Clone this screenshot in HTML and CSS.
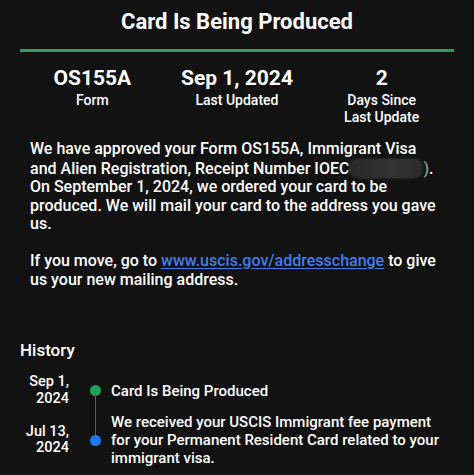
FILE: index.html
```html
<!DOCTYPE html>
<html lang="en">
<head>
<meta charset="utf-8">
<title>Card Is Being Produced</title>
<link rel="stylesheet" href="styles.css">
</head>
<body>
<main class="page">
  <h1 class="title">Card Is Being Produced</h1>
  <div class="divider"></div>
  <section class="stats">
    <div class="stat">
      <div class="stat-value">OS155A</div>
      <div class="stat-label">Form</div>
    </div>
    <div class="stat">
      <div class="stat-value">Sep 1, 2024</div>
      <div class="stat-label">Last Updated</div>
    </div>
    <div class="stat">
      <div class="stat-value">2</div>
      <div class="stat-label">Days Since<br>Last Update</div>
    </div>
  </section>
  <section class="message">
    <p>We have approved your Form OS155A, Immigrant Visa and Alien Registration, Receipt Number IOEC<span class="redact"></span><span class="dim">)</span>. On September 1, 2024, we ordered your card to be produced. We will mail your card to the address you gave us.</p>
    <p>If you move, go to <a class="link" href="#">www.uscis.gov/addresschange</a> to give us your new mailing address.</p>
  </section>
  <h2 class="history-title">History</h2>
  <ol class="timeline">
    <li class="event">
      <div class="event-date">Sep 1,<br>2024</div>
      <div class="event-dot-cell"><span class="dot dot-green first"></span></div>
      <div class="event-text">Card Is Being Produced</div>
    </li>
    <li class="event">
      <div class="event-date">Jul 13,<br>2024</div>
      <div class="event-dot-cell"><span class="dot dot-blue"></span></div>
      <div class="event-text">We received your USCIS Immigrant fee payment for your Permanent Resident Card related to your immigrant visa.</div>
    </li>
  </ol>
</main>
</body>
</html>
```

FILE: styles.css
```css
html, body {
  margin: 0;
  padding: 0;
  background: #121212;
}
body {
  color: #ffffff;
  font-family: Roboto, "Liberation Sans", Arial, sans-serif;
}
.page {
  padding: 8px 20px 0 20px;
}
.title {
  margin: 0;
  font-size: 22px;
  line-height: 28px;
  font-weight: 700;
  text-align: center;
}
.divider {
  margin-top: 13px;
  height: 3px;
  background: #2f9e5f;
}
.stats {
  display: grid;
  grid-template-columns: 1fr 1fr 1fr;
  margin-top: 13px;
  text-align: center;
}
.stat-value {
  font-size: 21px;
  line-height: 26px;
  font-weight: 700;
}
.stat-label {
  margin-top: 1px;
  font-size: 14px;
  line-height: 17px;
  font-weight: 500;
}
.message {
  margin-top: 14px;
  padding: 0 10px;
  font-size: 16px;
  line-height: 18.5px;
  font-weight: 500;
}
.message p {
  margin: 0 0 18.5px 0;
}
.redact {
  display: inline-block;
  width: 74px;
  height: 19px;
  vertical-align: -4px;
  border-radius: 10px;
  background: linear-gradient(90deg, #2a2a2a, #323232 60%, #2b2b2b);
  box-shadow: 0 0 3px 1px #262626;
}
.dim {
  color: #9a9a9a;
}
.link {
  color: #3f7ef0;
  text-decoration: underline;
  text-underline-offset: 2px;
}
.history-title {
  margin: 50px 0 0 0;
  font-size: 17px;
  line-height: 22px;
  font-weight: 500;
}
.timeline {
  list-style: none;
  margin: 13px 0 0 0;
  padding: 0;
  display: flex;
  flex-direction: column;
  gap: 6px;
}
.event {
  display: flex;
  align-items: center;
}
.event-date {
  width: 49px;
  flex: none;
  text-align: right;
  font-size: 14.5px;
  line-height: 16.5px;
  font-weight: 500;
}
.event-dot-cell {
  width: 12px;
  margin-left: 20px;
  flex: none;
  display: flex;
  justify-content: center;
  position: relative;
}
.dot {
  display: block;
  width: 11px;
  height: 11px;
  border-radius: 50%;
}
.dot-green {
  background: #22a35c;
}
.dot-blue {
  background: #1f78f0;
  position: relative;
  z-index: 1;
}
.first::after {
  content: "";
  position: absolute;
  left: 50%;
  top: 6px;
  width: 1px;
  margin-left: -0.5px;
  height: 50px;
  background: #5a5a5a;
  z-index: 0;
}
.event-text {
  margin-left: 10px;
  flex: 1;
  font-size: 15px;
  line-height: 18px;
  font-weight: 500;
  padding-right: 14px;
}
```
